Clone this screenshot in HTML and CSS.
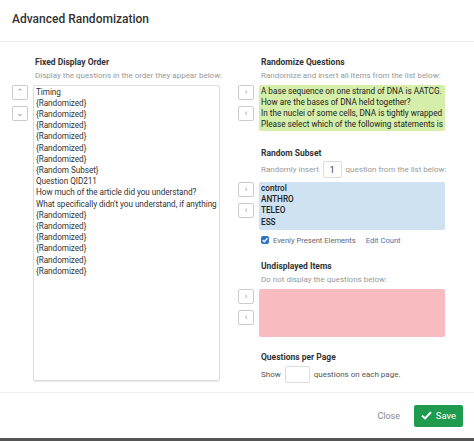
FILE: index.html
```html
<!DOCTYPE html>
<html>
	<head>
		<meta charset="UTF-8">
		<title>Advanced Randomization</title>
		<link rel="stylesheet" href="styles.css">
	</head>
	<body>
		<div class="modal">
			<div class="modal-head">Advanced Randomization</div>
			<div class="modal-body">
				<div class="col">
					<div class="sec">
						<div class="sec-title">Fixed Display Order</div>
						<div class="sec-sub">Display the questions in the order they appear below:</div>
						<div class="sec-row">
							<div class="btns">
								<span class="btn">&#8963;</span>
								<span class="btn">&#8964;</span>
							</div>
							<ul class="list list-fixed">
								<li>Timing</li>
								<li>{Randomized}</li>
								<li>{Randomized}</li>
								<li>{Randomized}</li>
								<li>{Randomized}</li>
								<li>{Randomized}</li>
								<li>{Randomized}</li>
								<li>{Random Subset}</li>
								<li>Question QID211</li>
								<li>How much of the article did you understand?</li>
								<li>What specifically didn't you understand, if anything</li>
								<li>{Randomized}</li>
								<li>{Randomized}</li>
								<li>{Randomized}</li>
								<li>{Randomized}</li>
								<li>{Randomized}</li>
								<li>{Randomized}</li>
							</ul>
						</div>
					</div>
				</div>
				<div class="col">
					<div class="sec">
						<div class="sec-title">Randomize Questions</div>
						<div class="sec-sub">Randomize and insert all items from the list below:</div>
						<div class="sec-row">
							<div class="btns">
								<span class="btn">&rsaquo;</span>
								<span class="btn">&lsaquo;</span>
							</div>
							<ul class="list list-green">
								<li>A base sequence on one strand of DNA is AATCG.</li>
								<li>How are the bases of DNA held together?</li>
								<li>In the nuclei of some cells, DNA is tightly wrapped</li>
								<li>Please select which of the following statements is</li>
							</ul>
						</div>
					</div>
					<div class="sec sec-subset">
						<div class="sec-title">Random Subset</div>
						<div class="sec-sub sec-input">Randomly insert <span class="num">1</span> question from the list below:</div>
						<div class="sec-row">
							<div class="btns">
								<span class="btn">&rsaquo;</span>
								<span class="btn">&lsaquo;</span>
							</div>
							<ul class="list list-blue">
								<li>control</li>
								<li>ANTHRO</li>
								<li>TELEO</li>
								<li>ESS</li>
							</ul>
						</div>
						<div class="check-row">
							<span class="check">
								<svg width="8" height="8" viewBox="0 0 8 8"><path d="M1.6 4.1 L3.3 5.7 L6.4 2.3" fill="none" stroke="#fff" stroke-width="1.3"/></svg>
							</span>
							<span class="check-label">Evenly Present Elements</span>
							<a class="link">Edit Count</a>
						</div>
					</div>
					<div class="sec sec-hidden">
						<div class="sec-title">Undisplayed Items</div>
						<div class="sec-sub">Do not display the questions below:</div>
						<div class="sec-row">
							<div class="btns">
								<span class="btn">&rsaquo;</span>
								<span class="btn">&lsaquo;</span>
							</div>
							<ul class="list list-red"></ul>
						</div>
					</div>
					<div class="sec sec-last">
						<div class="sec-title">Questions per Page</div>
						<div class="sec-sub sec-input sec-dark">Show <span class="num"></span> questions on each page.</div>
					</div>
				</div>
			</div>
			<div class="modal-foot">
				<a class="close">Close</a>
				<a class="save">
					<svg width="11" height="9" viewBox="0 0 11 9"><path d="M1 4.6 L4 7.4 L10 1.2" fill="none" stroke="#fff" stroke-width="2"/></svg>
					Save
				</a>
			</div>
		</div>
		<div class="bottom-bar"></div>
	</body>
</html>
```

FILE: styles.css
```css
* {
	margin: 0;
	padding: 0;
	box-sizing: border-box;
}
body {
	width: 474px;
	height: 441px;
	overflow: hidden;
	background: #fff;
	font-family: Roboto, "Liberation Sans", sans-serif;
	color: #333;
	display: flex;
	flex-direction: column;
}
li {
	list-style: none;
}
.modal {
	flex: 1;
	display: flex;
	flex-direction: column;
}
.modal-head {
	height: 42px;
	padding: 12px 12px 0;
	font-size: 12px;
	font-weight: 500;
	color: #333;
	border-bottom: 1px solid #eee;
}
.modal-body {
	flex: 1;
	display: flex;
	gap: 18px;
	padding: 14.5px 0 0 12px;
	border-bottom: 1px solid #eee;
}
.col {
	width: 208px;
}
.col + .col {
	width: 207px;
}
.sec-title {
	margin-left: 23px;
	font-size: 8.5px;
	font-weight: 700;
	color: #333;
	line-height: 11px;
}
.sec-sub {
	margin-left: 23px;
	margin-top: 2px;
	font-size: 8px;
	color: #999;
	line-height: 11px;
	white-space: nowrap;
	display: flex;
	align-items: center;
	gap: 4px;
}
.sec-input {
	height: 17px;
	margin-top: 2.5px;
}
.sec-dark {
	color: #555;
}
.num {
	display: inline-block;
	width: 25px;
	height: 17px;
	border: 1px solid #ddd;
	border-radius: 2px;
	color: #333;
	padding: 3px 6px;
	font-size: 8.5px;
	line-height: 10px;
}
.sec-row {
	display: flex;
	gap: 5px;
	margin-top: 4px;
}
.btns {
	width: 16px;
	display: flex;
	flex-direction: column;
	gap: 6px;
}
.btn {
	width: 16px;
	height: 15px;
	border: 1px solid #ccc;
	border-radius: 2px;
	background: #fff;
	color: #999;
	font-size: 9px;
	line-height: 12px;
	text-align: center;
}
.list {
	flex: 1;
	min-width: 0;
	font-size: 8.2px;
	line-height: 11.2px;
	padding: 1px 2px;
	border-radius: 2px;
}
.list li {
	white-space: nowrap;
	overflow: hidden;
}
.list-fixed {
	height: 296px;
	border: 1px solid #ddd;
	box-shadow: 0 1px 1px rgba(0,0,0,0.08);
	color: #333;
	letter-spacing: -0.05px;
}
.list-green {
	height: 46px;
	background: #d5eeaa;
	color: #222;
	font-size: 8.2px;
	line-height: 11px;
}
.list-blue {
	height: 48px;
	background: #cfe2f1;
	color: #222;
	font-weight: 500;
}
.list-red {
	height: 48px;
	background: #f8bcc0;
}
.sec-subset {
	margin-top: 17px;
}
.check-row {
	display: flex;
	align-items: center;
	height: 10px;
	margin: 5px 0 0 23px;
	font-size: 7.6px;
	color: #666;
}
.check {
	width: 8px;
	height: 8px;
	border-radius: 2px;
	background: #2b72c8;
	display: flex;
	margin-right: 4px;
}
.link {
	color: #3b7ab8;
	margin-left: 10px;
}
.sec-hidden {
	margin-top: 15.5px;
}
.sec-last {
	margin-top: 15.5px;
}
.modal-foot {
	height: 45px;
	display: flex;
	align-items: center;
	justify-content: flex-end;
	padding-right: 11px;
	gap: 14px;
}
.close {
	font-size: 9px;
	color: #888;
}
.save {
	width: 49px;
	height: 22px;
	border-radius: 2px;
	background: #1e9b4e;
	color: #fff;
	font-size: 9.5px;
	display: flex;
	align-items: center;
	justify-content: center;
	gap: 4px;
}
.bottom-bar {
	height: 3px;
	background: #555;
}
```
